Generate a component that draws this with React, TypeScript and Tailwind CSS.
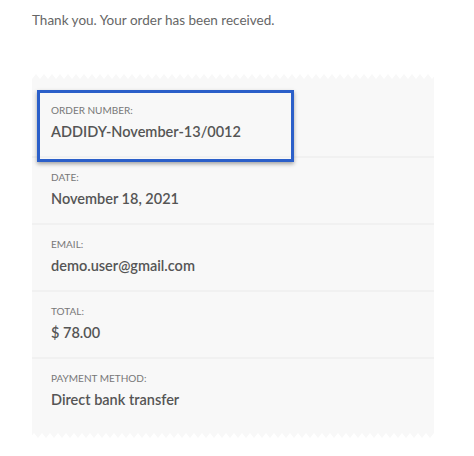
import React from 'react';

const rows = [
  { label: 'Order number:', value: 'ADDIDY-November-13/0012' },
  { label: 'Date:', value: 'November 18, 2021' },
  { label: 'Email:', value: 'demo.user@gmail.com' },
  { label: 'Total:', value: '$ 78.00' },
  { label: 'Payment method:', value: 'Direct bank transfer' },
];

const Zigzag: React.FC<{ flip?: boolean }> = ({ flip }) => (
  <svg width="402" height="6" className={`block ${flip ? 'rotate-180' : ''}`}>
    <defs>
      <pattern id={flip ? 'zzb' : 'zzt'} width="8" height="6" patternUnits="userSpaceOnUse">
        <path d="M0 6 L4 1 L8 6 Z" fill="#f8f8f8" />
      </pattern>
    </defs>
    <rect width="402" height="6" fill={`url(#${flip ? 'zzb' : 'zzt'})`} />
  </svg>
);

const App: React.FC = () => {
  return (
    <div className="w-[474px] h-[456px] bg-white px-8 pt-[11px]" style={{ fontFamily: 'Lato, "Open Sans", sans-serif' }}>
      <p className="text-[13.5px] text-[#666] leading-[18px]">Thank you. Your order has been received.</p>

      <div className="mt-[44px] w-[402px] relative">
        <Zigzag />
        <ul className="bg-[#f8f8f8] pt-[12px] pb-[9px]">
          {rows.map((r, i) => (
            <li
              key={i}
              className={`pl-[19px] pt-[13px] pb-[14px] ${i < rows.length - 1 ? 'border-b-2 border-[#f1f1f1]' : ''}`}
            >
              <div className="text-[10px] uppercase text-[#777] leading-[13px]">{r.label}</div>
              <div className="mt-[5px] text-[14.5px] font-semibold text-[#555] leading-[20px]">{r.value}</div>
            </li>
          ))}
        </ul>
        <Zigzag flip />
        <div className="absolute left-[5px] top-[17px] w-[257px] h-[72px] border-[3px] border-[#2b5fc9] shadow-[0_2px_4px_rgba(0,0,0,0.35)]" />
      </div>
    </div>
  );
};

export default App;
